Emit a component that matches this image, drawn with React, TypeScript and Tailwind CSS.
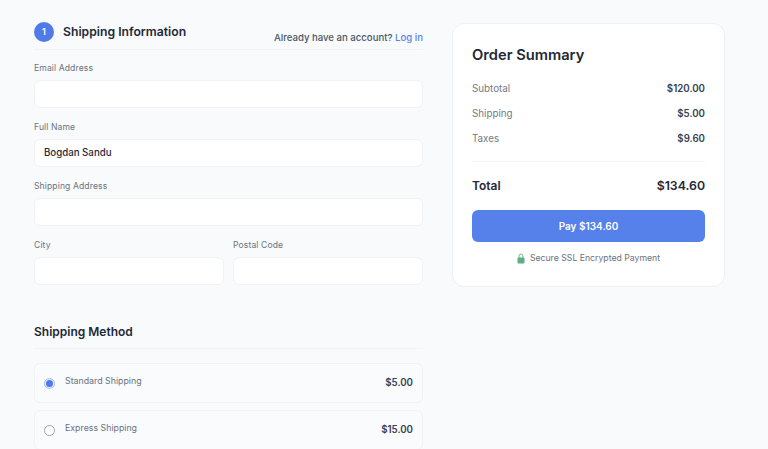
import { ReactNode } from "react";

function Field({ label, value, className = "" }: { label: string; value?: string; className?: string }) {
  return (
    <div className={className}>
      <div className="h-[14px] text-[8.6px] leading-[14px] tracking-[0.1px] text-[#6b7280]">{label}</div>
      <div className="mt-[5px] flex h-[28px] items-center rounded-[6px] border border-[#f0f2f6] bg-white px-[9px] text-[9.7px] font-medium text-[#1f2937]">
        {value}
      </div>
    </div>
  );
}

function Row({ label, amount }: { label: string; amount: string }) {
  return (
    <div className="flex h-[25px] items-center justify-between">
      <span className="text-[9.8px] text-[#737a86]">{label}</span>
      <span className="text-[9.7px] font-semibold text-[#374151]">{amount}</span>
    </div>
  );
}

function Method({ name, price, children }: { name: string; price: string; children: ReactNode }) {
  return (
    <div className="flex h-[40px] items-center rounded-[6px] border border-[#f0f2f6] bg-[#fafbfd] pr-[9px] pl-[9px]">
      {children}
      <span className="mb-[5px] ml-[10px] flex-1 text-[8.8px] text-[#6b7280]">{name}</span>
      <span className="text-[9.7px] font-semibold text-[#374151]">{price}</span>
    </div>
  );
}

export default function App() {
  return (
    <div
      className="flex h-[449px] w-[768px] gap-[29px] overflow-hidden bg-[#f8fafc] pt-[20px] pl-[34px]"
      style={{ fontFamily: "Inter, sans-serif" }}
    >
      {/* left column */}
      <div className="w-[389px] shrink-0">
        <div className="flex h-[30px] items-start justify-between border-b border-[#f0f2f6]">
          <div className="mt-[2px] flex items-center gap-[9px]">
            <span className="flex h-[20px] w-[20px] items-center justify-center rounded-full bg-[#4f7ae8] text-[9px] font-semibold text-white">
              1
            </span>
            <span className="text-[12.2px] font-semibold text-[#1f2937]">Shipping Information</span>
          </div>
          <div className="mt-[11px] text-[9.6px] font-medium text-[#4b5563]">
            Already have an account? <span className="text-[#5b82e8]">Log in</span>
          </div>
        </div>
        <div className="mt-[11px] flex flex-col gap-[12px]">
          <Field label="Email Address" />
          <Field label="Full Name" value="Bogdan Sandu" />
          <Field label="Shipping Address" />
          <div className="flex gap-[9px]">
            <Field label="City" className="flex-1" />
            <Field label="Postal Code" className="flex-1" />
          </div>
        </div>
        <h2 className="mt-[38px] h-[26px] border-b border-[#f0f2f6] text-[12px] leading-[18px] font-semibold text-[#1f2937]">
          Shipping Method
        </h2>
        <div className="mt-[14px] flex flex-col gap-[7px]">
          <Method name="Standard Shipping" price="$5.00">
            <span className="flex h-[11px] w-[11px] items-center justify-center rounded-full border border-[#a9bff2] bg-[#e6edfc]">
              <span className="h-[7px] w-[7px] rounded-full bg-[#4f7ae8]" />
            </span>
          </Method>
          <Method name="Express Shipping" price="$15.00">
            <span className="h-[11px] w-[11px] rounded-full border border-[#9ca3af] bg-white" />
          </Method>
        </div>
      </div>

      {/* order summary */}
      <div className="mt-[3px] h-[264px] w-[273px] shrink-0 self-start rounded-[12px] border border-[#eef0f4] bg-white px-[19px] pt-[21px]">
        <h2 className="text-[14.7px] leading-[20px] font-semibold text-[#1f2937]">Order Summary</h2>
        <div className="mt-[12px]">
          <Row label="Subtotal" amount="$120.00" />
          <Row label="Shipping" amount="$5.00" />
          <Row label="Taxes" amount="$9.60" />
        </div>
        <div className="mt-[9px] flex h-[49px] items-center justify-between border-t border-[#f0f2f6] font-semibold text-[#1f2937]">
          <span className="text-[12px]">Total</span>
          <span className="text-[12.3px]">$134.60</span>
        </div>
        <button className="flex h-[32px] w-full items-center justify-center rounded-[6px] bg-[#5680ea] text-[10px] font-semibold text-white">
          Pay $134.60
        </button>
        <div className="mt-[10px] flex items-center justify-center gap-[5px] text-[8.7px] text-[#6b7280]">
          <svg width="8" height="11" viewBox="0 0 8 11">
            <path d="M2 5V3a2 2 0 0 1 4 0v2" fill="none" stroke="#6fbf8f" strokeWidth="1" />
            <rect x="0.5" y="4.5" width="7" height="6" rx="1" fill="#5cb083" />
          </svg>
          Secure SSL Encrypted Payment
        </div>
      </div>
    </div>
  );
}
